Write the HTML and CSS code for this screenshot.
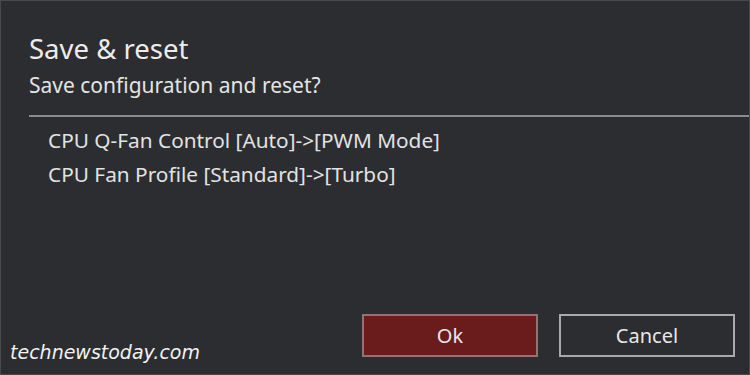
FILE: index.html
```html
<!DOCTYPE html>
<html>
<head>
<meta charset="utf-8">
<link rel="stylesheet" href="styles.css">
</head>
<body>
<div class="frame">
  <div class="header">
    <h1 class="title">Save &amp; reset</h1>
    <p class="subtitle">Save configuration and reset?</p>
  </div>
  <div class="divider"></div>
  <ul class="changes">
    <li>CPU Q-Fan Control [Auto]-&gt;[PWM Mode]</li>
    <li>CPU Fan Profile [Standard]-&gt;[Turbo]</li>
  </ul>
  <div class="footer">
    <span class="watermark">technewstoday.com</span>
    <div class="actions">
      <button class="btn btn-ok">Ok</button>
      <button class="btn btn-cancel">Cancel</button>
    </div>
  </div>
</div>
</body>
</html>
```

FILE: styles.css
```css
* { box-sizing: border-box; }
html, body { margin: 0; padding: 0; background: #2c2d30; }
.frame {
  width: 750px;
  height: 375px;
  border: 1px solid #48494c;
  background: #2c2d30;
  display: flex;
  flex-direction: column;
  font-family: "Noto Sans", "Open Sans", sans-serif;
  color: #e6e6e6;
}
.header { padding: 29px 0 0 28px; }
.title {
  margin: 0;
  font-weight: 400;
  font-size: 27.5px;
  line-height: 38px;
  color: #ececec;
}
.subtitle {
  margin: 0;
  font-size: 21px;
  line-height: 34px;
  color: #e4e4e4;
}
.divider {
  margin: 13px 0 0 28px;
  height: 2px;
  background: #8a8a8b;
}
.changes {
  list-style: none;
  margin: 0;
  padding: 6px 0 0 47px;
  font-size: 20.8px;
  line-height: 34px;
  color: #e2e2e2;
}
.footer {
  margin-top: auto;
  display: flex;
  align-items: flex-end;
  justify-content: space-between;
  padding: 0 14px 17px 9px;
}
.watermark {
  font-family: "DejaVu Sans", sans-serif;
  font-style: italic;
  font-size: 19px;
  color: #f2f2f2;
  line-height: 22px;
  margin-bottom: -6px;
}
.actions { display: flex; gap: 21px; }
.btn {
  width: 176px;
  height: 43px;
  font-family: "Noto Sans", "Open Sans", sans-serif;
  font-size: 20px;
  color: #e8e8e8;
  background: transparent;
  border: 2px solid #a9a9aa;
  padding: 0;
}
.btn-ok {
  background: #6a1b1c;
  border-color: #8f7474;
}
```
